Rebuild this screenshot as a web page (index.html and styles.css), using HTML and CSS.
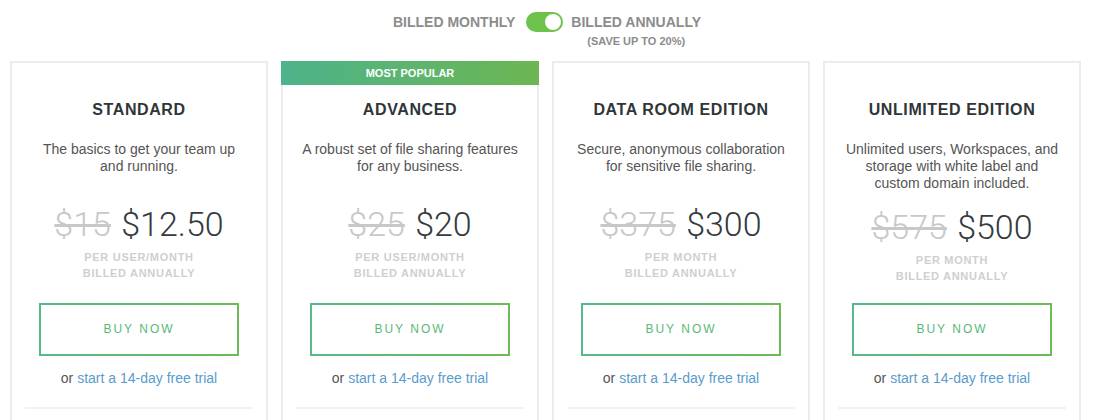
FILE: index.html
```html
<!DOCTYPE html>
<html lang="en">
<head>
  <meta charset="UTF-8">
  <meta name="viewport" content="width=device-width, initial-scale=1.0">
  <title>Pricing</title>

  <link rel="stylesheet" href="styles.css">
</head>
<body>

  <div class="billing">
    <span class="billing-label">BILLED MONTHLY</span>
    <span class="switch"><span class="knob"></span></span>
    <div class="billing-annual">
      <span class="billing-label">BILLED ANNUALLY</span>
      <span class="save">(SAVE UP TO 20%)</span>
    </div>
  </div>

  <div class="plans">
    <div class="plan">
      <h2 class="plan-name">STANDARD</h2>
      <p class="plan-desc">The basics to get your team up and running.</p>
      <div class="price"><s class="old">$15</s> $12.50</div>
      <div class="per">PER USER/MONTH<br>BILLED ANNUALLY</div>
      <div class="actions">
        <a class="buy">BUY NOW</a>
        <p class="trial">or <a href="#">start a 14-day free trial</a></p>
      </div>
      <div class="features"></div>
    </div>

    <div class="plan">
      <div class="badge">MOST POPULAR</div>
      <h2 class="plan-name">ADVANCED</h2>
      <p class="plan-desc">A robust set of file sharing features for any business.</p>
      <div class="price"><s class="old">$25</s> $20</div>
      <div class="per">PER USER/MONTH<br>BILLED ANNUALLY</div>
      <div class="actions">
        <a class="buy">BUY NOW</a>
        <p class="trial">or <a href="#">start a 14-day free trial</a></p>
      </div>
      <div class="features"></div>
    </div>

    <div class="plan">
      <h2 class="plan-name">DATA ROOM EDITION</h2>
      <p class="plan-desc">Secure, anonymous collaboration for sensitive file sharing.</p>
      <div class="price"><s class="old">$375</s> $300</div>
      <div class="per">PER MONTH<br>BILLED ANNUALLY</div>
      <div class="actions">
        <a class="buy">BUY NOW</a>
        <p class="trial">or <a href="#">start a 14-day free trial</a></p>
      </div>
      <div class="features"></div>
    </div>

    <div class="plan">
      <h2 class="plan-name">UNLIMITED EDITION</h2>
      <p class="plan-desc">Unlimited users, Workspaces, and storage with white label and custom domain included.</p>
      <div class="price"><s class="old">$575</s> $500</div>
      <div class="per">PER MONTH<br>BILLED ANNUALLY</div>
      <div class="actions">
        <a class="buy">BUY NOW</a>
        <p class="trial">or <a href="#">start a 14-day free trial</a></p>
      </div>
      <div class="features"></div>
    </div>
  </div>

</body>
</html>
```

FILE: styles.css
```css
body {
  font-family: 'Liberation Sans', Arial, sans-serif;
  background-color: #fff;
  color: #555;
  margin: 0;
  padding: 0;
}

/* Billing toggle */
.billing {
  display: flex;
  justify-content: center;
  align-items: flex-start;
  padding-top: 12px;
}

.billing-label {
  font-size: 14px;
  font-weight: bold;
  line-height: 20px;
  color: #8c8c8c;
}

.switch {
  position: relative;
  width: 37px;
  height: 20px;
  border-radius: 10px;
  background-color: #6cc24a;
  margin: 0 8px 0 11px;
}

.knob {
  position: absolute;
  top: 2px;
  right: 2px;
  width: 16px;
  height: 16px;
  border-radius: 50%;
  background-color: #fff;
}

.billing-annual {
  display: flex;
  flex-direction: column;
  align-items: center;
}

.save {
  font-size: 11px;
  font-weight: bold;
  line-height: 14px;
  margin-top: 2px;
  color: #8c8c8c;
}

/* Plans */
.plans {
  display: grid;
  grid-template-columns: repeat(4, 258px);
  gap: 13px;
  margin: 13px 0 0 10px;
}

.plan {
  position: relative;
  display: flex;
  flex-direction: column;
  border: 2px solid #ececec;
  padding: 37px 16px 0;
  text-align: center;
}

.badge {
  position: absolute;
  top: -2px;
  left: -2px;
  right: -2px;
  height: 24px;
  line-height: 24px;
  font-size: 11px;
  font-weight: bold;
  color: #fff;
  background: linear-gradient(90deg, #4db38b, #6cb652);
}

.plan-name {
  margin: 0;
  font-size: 16px;
  font-weight: bold;
  letter-spacing: 0.6px;
  line-height: 20px;
  color: #2f3538;
}

.plan-desc {
  margin: 21px 2px 0;
  min-height: 48px;
  font-size: 14px;
  line-height: 17px;
  color: #555;
}

.price {
  margin-top: 15px;
  font-family: Roboto, 'Liberation Sans', sans-serif;
  font-weight: 300;
  font-size: 34px;
  line-height: 40px;
  color: #353b40;
}

.old {
  color: #c8c8c8;
  margin-right: 2px;
}

.per {
  margin-top: 5px;
  font-size: 11px;
  font-weight: bold;
  letter-spacing: 0.7px;
  line-height: 16px;
  color: #cfcfcf;
}

.actions {
  margin-top: auto;
  padding-top: 19px;
}

.buy {
  display: block;
  box-sizing: border-box;
  width: 200px;
  height: 53px;
  margin: 0 auto;
  line-height: 49px;
  border: 2px solid;
  border-image: linear-gradient(90deg, #55b98b, #6dbb58) 1;
  font-size: 12px;
  letter-spacing: 2px;
  color: #5cb878;
  cursor: pointer;
}

.trial {
  margin: 12px 0 0;
  font-size: 14px;
  line-height: 20px;
  color: #555;
}

.trial a {
  color: #5a9ccb;
  text-decoration: none;
}

.features {
  margin: 19px -3px 0;
  border-top: 2px solid #f2f2f2;
  height: 60px;
}
```
